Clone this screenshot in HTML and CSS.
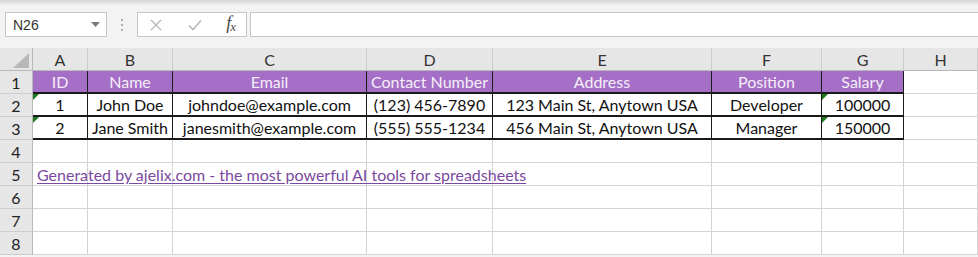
FILE: index.html
```html
<!DOCTYPE html>
<html>
<head>
<meta charset="utf-8">
<link rel="stylesheet" href="styles.css">
</head>
<body>
<div class="app">
  <div class="topband"></div>
  <div class="fbar">
    <div class="namebox"><span>N26</span><svg class="dd" width="9" height="5" viewBox="0 0 9 5"><path d="M0 0H9L4.5 5Z" fill="#7a7a7a"/></svg></div>
    <div class="sep"><i></i><i></i><i></i></div>
    <div class="fxbox">
      <svg width="14" height="14" viewBox="0 0 14 14"><path d="M2 2L12 12M12 2L2 12" stroke="#b9b9b9" stroke-width="1.4" fill="none"/></svg>
      <svg width="16" height="14" viewBox="0 0 16 14"><path d="M2 7.5L6 11.5L14 2.5" stroke="#b9b9b9" stroke-width="1.6" fill="none"/></svg>
      <span class="fx">f<sub>x</sub></span>
    </div>
    <div class="finput"></div>
  </div>
  <div class="sheet">
    <div class="ch corner"><svg width="16" height="15" viewBox="0 0 16 15"><path d="M16 0V15H0Z" fill="#b8b8b8"/></svg></div>
    <div class="ch">A</div><div class="ch">B</div><div class="ch">C</div><div class="ch">D</div><div class="ch">E</div><div class="ch">F</div><div class="ch">G</div><div class="ch">H</div>

    <div class="rh">1</div>
    <div class="c hd">ID</div><div class="c hd">Name</div><div class="c hd">Email</div><div class="c hd">Contact Number</div><div class="c hd">Address</div><div class="c hd">Position</div><div class="c hd">Salary</div><div class="c"></div>

    <div class="rh">2</div>
    <div class="c t tri">1</div><div class="c t">John Doe</div><div class="c t">johndoe@example.com</div><div class="c t">(123) 456-7890</div><div class="c t">123 Main St, Anytown USA</div><div class="c t">Developer</div><div class="c t tri">100000</div><div class="c"></div>

    <div class="rh">3</div>
    <div class="c t tri">2</div><div class="c t">Jane Smith</div><div class="c t">janesmith@example.com</div><div class="c t">(555) 555-1234</div><div class="c t">456 Main St, Anytown USA</div><div class="c t">Manager</div><div class="c t tri">150000</div><div class="c"></div>

    <div class="rh">4</div>
    <div class="c"></div><div class="c"></div><div class="c"></div><div class="c"></div><div class="c"></div><div class="c"></div><div class="c"></div><div class="c"></div>

    <div class="rh">5</div>
    <div class="c link"><a href="#">Generated by ajelix.com - the most powerful AI tools for spreadsheets</a></div><div class="c"></div><div class="c"></div><div class="c"></div><div class="c"></div><div class="c"></div><div class="c"></div><div class="c"></div>

    <div class="rh">6</div>
    <div class="c"></div><div class="c"></div><div class="c"></div><div class="c"></div><div class="c"></div><div class="c"></div><div class="c"></div><div class="c"></div>

    <div class="rh">7</div>
    <div class="c"></div><div class="c"></div><div class="c"></div><div class="c"></div><div class="c"></div><div class="c"></div><div class="c"></div><div class="c"></div>

    <div class="rh">8</div>
    <div class="c"></div><div class="c"></div><div class="c"></div><div class="c"></div><div class="c"></div><div class="c"></div><div class="c"></div><div class="c"></div>
  </div>
</div>
</body>
</html>
```
FILE: styles.css
```css
* { box-sizing: border-box; }
html, body { margin: 0; padding: 0; }
body {
  width: 978px;
  height: 257px;
  overflow: hidden;
  background: #f3f3f3;
  font-family: "Lato", "Liberation Sans", sans-serif;
}
.app { width: 978px; height: 257px; overflow: hidden; }
.topband {
  height: 6px;
  background: linear-gradient(#d6d6d6, #f3f3f3);
}
.fbar {
  display: flex;
  align-items: stretch;
  height: 25px;
  margin-top: 6px;
  padding-left: 5px;
}
.namebox {
  width: 102px;
  background: #fff;
  border: 1px solid #c6c6c6;
  display: flex;
  align-items: center;
  justify-content: space-between;
  padding: 0 6px 0 7px;
  font-family: "Liberation Sans", sans-serif;
  font-size: 14px;
  color: #333;
}
.sep {
  width: 30px;
  display: flex;
  flex-direction: column;
  align-items: center;
  justify-content: center;
  gap: 3px;
}
.sep i { display: block; width: 2px; height: 2px; background: #b0b0b0; }
.fxbox {
  width: 110px;
  background: #fff;
  border: 1px solid #c6c6c6;
  display: flex;
  align-items: center;
  justify-content: space-between;
  padding: 0 10px 0 11px;
}
.fx {
  font-family: "Liberation Serif", serif;
  font-style: italic;
  font-size: 18px;
  color: #4a4a4a;
  line-height: 1;
  margin-top: -3px;
}
.fx sub { font-size: 13px; vertical-align: -2px; margin-left: -1px; }
.finput {
  flex: 1;
  margin-left: 3px;
  background: #fff;
  border: 1px solid #c6c6c6;
  border-right: none;
}
.sheet {
  margin-top: 11px;
  display: grid;
  grid-template-columns: 33px 55px 85px 194px 126px 219px 110px 82px 74px;
  grid-auto-rows: 23px;
  background: #fff;
  font-size: 16px;
  color: #111;
}
.ch {
  background: #e6e6e6;
  border-right: 1px solid #cdcdcd;
  border-bottom: 1px solid #b8b8b8;
  display: flex;
  align-items: center;
  justify-content: center;
  color: #333;
  font-size: 16px;
}
.corner { justify-content: flex-end; align-items: flex-end; padding: 0 3px 2px 0; border-right-color: #b8b8b8; }
.rh {
  background: #e6e6e6;
  border-right: 1px solid #b8b8b8;
  border-bottom: 1px solid #cdcdcd;
  display: flex;
  align-items: center;
  justify-content: center;
  color: #222;
}
.c {
  position: relative;
  border-right: 1px solid #d4d4d4;
  border-bottom: 1px solid #d4d4d4;
  display: flex;
  align-items: center;
  justify-content: center;
  white-space: nowrap;
}
.hd {
  background: #a66fc7;
  color: #f4eef8;
  border-right: 1px solid #1a1a1a;
  border-bottom: 2px solid #1a1a1a;
}
.t {
  border-right: 1px solid #1a1a1a;
  border-bottom: 2px solid #1a1a1a;
}
.tri::before {
  content: "";
  position: absolute;
  left: 0;
  top: 0;
  border-style: solid;
  border-width: 6px 6px 0 0;
  border-color: #1e7a1e transparent transparent transparent;
}
.link {
  justify-content: flex-start;
  padding-left: 4px;
  overflow: visible;
  z-index: 1;
}
.link a {
  color: #7a4aa0;
  text-decoration: underline;
  text-underline-offset: 2px;
}
```
